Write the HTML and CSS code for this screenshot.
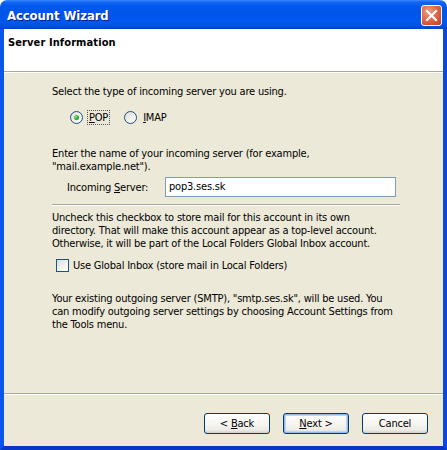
FILE: index.html
```html
<!DOCTYPE html>
<html>
<head>
<meta charset="utf-8">
<link rel="stylesheet" href="styles.css">
</head>
<body>
<div class="window">
  <div class="titlebar">
    <span class="title">Account Wizard</span>
    <span class="close">
      <svg width="13" height="13" viewBox="0 0 13 13"><path d="M2 2 L11 11 M11 2 L2 11" stroke="#fff" stroke-width="2.2" stroke-linecap="square"/></svg>
    </span>
  </div>
  <div class="frame">
    <div class="header">Server Information</div>
    <div class="hsep"></div>
    <div class="content">
      <p class="p1">Select the type of incoming server you are using.</p>
      <div class="radios">
        <span class="radio checked"></span><span class="rlabel focus"><u>P</u>OP</span>
        <span class="radio"></span><span class="rlabel"><u>I</u>MAP</span>
      </div>
      <p class="p2">Enter the name of your incoming server (for example,<br>"mail.example.net").</p>
      <div class="field">
        <span class="flabel">Incoming <u>S</u>erver:</span>
        <span class="input">pop3.ses.sk</span>
      </div>
      <div class="sep"></div>
      <p class="p3">Uncheck this checkbox to store mail for this account in its own<br>directory. That will make this account appear as a top-level account.<br>Otherwise, it will be part of the Local Folders Global Inbox account.</p>
      <div class="check"><span class="box"></span><span>Use Global Inbox (store mail in Local Folders)</span></div>
      <p class="p4">Your existing outgoing server (SMTP), "smtp.ses.sk", will be used. You<br>can modify outgoing server settings by choosing Account Settings from<br>the Tools menu.</p>
    </div>
    <div class="fsep"></div>
    <div class="footer">
      <span class="btn"><span>&lt; <u>B</u>ack</span></span>
      <span class="btn default"><span><u>N</u>ext &gt;</span></span>
      <span class="btn cancel"><span>Cancel</span></span>
    </div>
  </div>
</div>
</body>
</html>
```
FILE: styles.css
```css
* { box-sizing: border-box; }
html, body { margin: 0; padding: 0; background: #fff; }
body { width: 447px; height: 450px; overflow: hidden; }
.window {
  width: 447px; height: 450px;
  display: flex; flex-direction: column;
  font-family: "DejaVu Sans Condensed", "DejaVu Sans", sans-serif;
  font-size: 11px; color: #000;
  letter-spacing: -0.2px;
}
.titlebar {
  height: 29px; flex: none;
  display: flex; align-items: center; justify-content: space-between;
  padding: 0 5px 0 7px;
  border-radius: 7px 7px 0 0;
  background: linear-gradient(to bottom, #3A8CFF 0, #1567F5 2px, #0058EE 6px, #0055EA 14px, #0058EF 22px, #0050DF 26px, #0041C9 29px);
}
.title {
  color: #fff; font-weight: bold; font-size: 13px;
  letter-spacing: -0.1px;
  text-shadow: 1px 1px 0 #0A1E8C;
  padding-top: 2px;
}
.close {
  width: 21px; height: 21px;
  border: 1px solid #fff; border-radius: 3px;
  background: radial-gradient(circle at 35% 30%, #F0A08A 0, #E36F4F 40%, #C6381A 100%);
  display: flex; align-items: center; justify-content: center;
  margin-top: 2px;
}
.frame {
  flex: 1; display: flex; flex-direction: column;
  border-left: 4px solid #0A56E8;
  border-right: 4px solid #0A4AD8;
  border-bottom: 4px solid #0837C8;
  background: #ECE9D8;
}
.header {
  height: 42px; flex: none; background: #fff;
  font-weight: bold; font-size: 11px;
  letter-spacing: 0.1px;
  padding: 7px 0 0 4px;
}
.hsep { height: 2px; flex: none; border-top: 1px solid #ACA899; border-bottom: 1px solid #fff; }
.content { flex: 1; padding: 0 43px 0 48px; }
p { margin: 0; line-height: 13px; white-space: nowrap; }
.p1 { margin-top: 12px; }
.radios { display: flex; align-items: center; height: 13px; margin-top: 13px; padding-left: 18px; }
.radio {
  width: 13px; height: 13px; border-radius: 50%;
  border: 1px solid #1C5180;
  background: linear-gradient(135deg, #DCDBD5 0, #F4F3EE 60%, #fff 100%);
  display: flex; align-items: center; justify-content: center;
}
.radio.checked::after {
  content: ""; width: 5px; height: 5px; border-radius: 50%;
  background: radial-gradient(circle at 35% 35%, #8BE88B 0, #21A121 60%, #1A8A1A 100%);
}
.rlabel { margin-left: 4px; line-height: 13px; padding: 0 1px; border: 1px dotted transparent; }
.rlabel.focus { border-color: #555; margin-right: 14px; }
.p2 { margin-top: 23px; }
.field { display: flex; align-items: center; margin-top: 4px; height: 20px; }
.flabel { padding-left: 15px; width: 113px; }
.input {
  width: 231px; height: 20px;
  border: 1px solid #7F9DB9; background: #fff;
  padding: 0 3px; line-height: 18px;
}
.sep { height: 2px; margin-top: 7px; border-top: 1px solid #ACA899; border-bottom: 1px solid #fff; }
.p3 { margin-top: 5px; }
.check { display: flex; align-items: center; margin-top: 9px; height: 13px; padding-left: 4px; }
.box {
  width: 13px; height: 13px; border: 1px solid #1C5180;
  background: linear-gradient(135deg, #DCDBD5 0, #F4F3EE 60%, #fff 100%);
  margin-right: 4px;
}
.p4 { margin-top: 20px; }
.fsep { height: 2px; flex: none; border-top: 1px solid #ACA899; border-bottom: 1px solid #fff; }
.footer {
  height: 51px; flex: none;
  display: flex; justify-content: flex-end; align-items: flex-start;
  padding: 18px 15px 0 0; gap: 13px;
}
.btn {
  width: 66px; height: 21px;
  border: 1px solid #003C74; border-radius: 3px;
  background: linear-gradient(to bottom, #FFFFFF 0, #F6F5F0 50%, #ECEBE5 85%, #D6D0C5 100%);
  display: flex; align-items: center; justify-content: center;
}
.btn.default { box-shadow: inset 0 0 0 1px #98B8EA, inset 0 0 0 2px #BCD4F6; }
```
